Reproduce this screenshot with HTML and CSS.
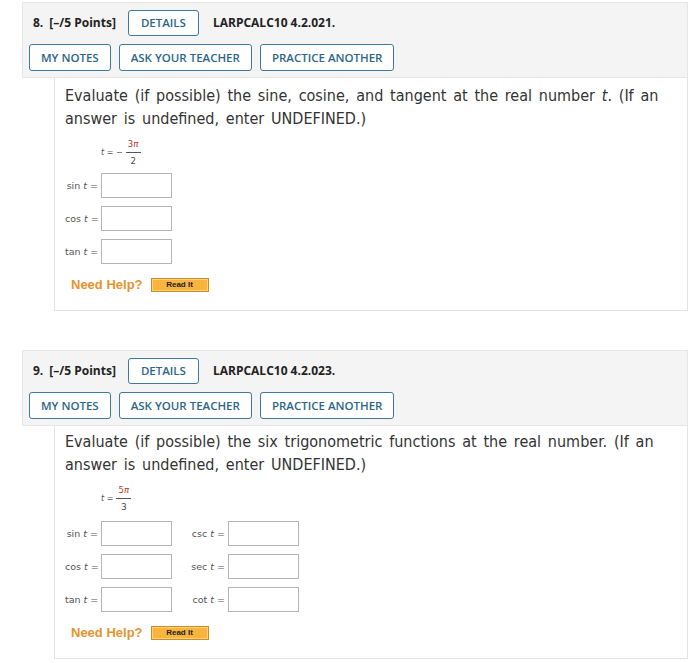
FILE: index.html
```html
<!DOCTYPE html>
<html>
<head>
<meta charset="utf-8">
<link rel="stylesheet" href="styles.css">
</head>
<body>
<div class="page">

  <section class="question q1">
    <div class="qhead">
      <div class="row1">
        <span class="num">8.</span>
        <span class="pts">[–/5 Points]</span>
        <button class="btn details">DETAILS</button>
        <span class="code">LARPCALC10 4.2.021.</span>
      </div>
      <div class="row2">
        <button class="btn">MY NOTES</button>
        <button class="btn">ASK YOUR TEACHER</button>
        <button class="btn">PRACTICE ANOTHER</button>
      </div>
    </div>
    <div class="qbody">
      <p class="prompt">Evaluate (if possible) the sine, cosine, and tangent at the real number <span class="var">t</span>. (If an answer is undefined, enter UNDEFINED.)</p>
      <div class="given">
        <span class="lhs"><span class="var">t</span> = −</span>
        <span class="frac"><span class="numr">3<span class="var">π</span></span><span class="den">2</span></span>
      </div>
      <div class="fields one">
        <label class="lab">sin <span class="var">t</span> =</label><span class="box"></span>
        <label class="lab">cos <span class="var">t</span> =</label><span class="box"></span>
        <label class="lab">tan <span class="var">t</span> =</label><span class="box"></span>
      </div>
      <div class="help">
        <span class="need">Need Help?</span>
        <span class="readit">Read It</span>
      </div>
    </div>
  </section>

  <section class="question q2">
    <div class="qhead">
      <div class="row1">
        <span class="num">9.</span>
        <span class="pts">[–/5 Points]</span>
        <button class="btn details">DETAILS</button>
        <span class="code">LARPCALC10 4.2.023.</span>
      </div>
      <div class="row2">
        <button class="btn">MY NOTES</button>
        <button class="btn">ASK YOUR TEACHER</button>
        <button class="btn">PRACTICE ANOTHER</button>
      </div>
    </div>
    <div class="qbody">
      <p class="prompt">Evaluate (if possible) the six trigonometric functions at the real number. (If an answer is undefined, enter UNDEFINED.)</p>
      <div class="given">
        <span class="lhs"><span class="var">t</span> =</span>
        <span class="frac"><span class="numr">5<span class="var">π</span></span><span class="den">3</span></span>
      </div>
      <div class="fields two">
        <label class="lab">sin <span class="var">t</span> =</label><span class="box"></span>
        <label class="lab">csc <span class="var">t</span> =</label><span class="box"></span>
        <label class="lab">cos <span class="var">t</span> =</label><span class="box"></span>
        <label class="lab">sec <span class="var">t</span> =</label><span class="box"></span>
        <label class="lab">tan <span class="var">t</span> =</label><span class="box"></span>
        <label class="lab">cot <span class="var">t</span> =</label><span class="box"></span>
      </div>
      <div class="help">
        <span class="need">Need Help?</span>
        <span class="readit">Read It</span>
      </div>
    </div>
  </section>

</div>
</body>
</html>
```

FILE: styles.css
```css
html, body {
  margin: 0;
  padding: 0;
  background: #fff;
}

.page {
  padding: 2px 12px 0 22px;
  width: 666px;
}

.question {
  margin-bottom: 39px;
}

.question:last-child {
  margin-bottom: 0;
}

.qhead {
  background: #f4f4f4;
  border: 1px solid #e6e6e6;
  padding: 6px 0 6px 6px;
  font-family: "Open Sans", "Liberation Sans", sans-serif;
}

.row1 {
  display: flex;
  align-items: center;
  height: 27px;
  padding-left: 4px;
}

.num {
  font-weight: 700;
  font-size: 12px;
  color: #222;
  margin-right: 6px;
}

.pts {
  font-weight: 700;
  font-size: 12px;
  color: #222;
  margin-right: 12px;
}

.code {
  font-weight: 700;
  font-size: 12px;
  color: #222;
  margin-left: 14px;
}

.btn {
  font-family: "Open Sans", "Liberation Sans", sans-serif;
  font-weight: 600;
  font-size: 11.5px;
  color: #2b6688;
  background: #fff;
  border: 1.5px solid #3c7b9c;
  border-radius: 3px;
  height: 27px;
  padding: 0 11px;
  line-height: 1;
  cursor: pointer;
}

.details {
  height: 26px;
  padding: 0 12px;
}

.row2 {
  display: flex;
  gap: 8px;
  margin-top: 8px;
}

.qbody {
  margin-left: 32px;
  border-left: 1px solid #e4e4e4;
  border-right: 1px solid #e4e4e4;
  border-bottom: 1px solid #e4e4e4;
  padding: 6px 0 18px 10px;
  font-family: "DejaVu Sans", Verdana, sans-serif;
  color: #333;
}

.q2 .qbody {
  padding-top: 4px;
}

.var {
  font-style: italic;
}

.prompt {
  margin: 0;
  font-size: 16px;
  line-height: 23px;
  font-stretch: condensed;
  letter-spacing: 0;
  word-spacing: 2.2px;
  color: #333;
}

.given {
  display: flex;
  align-items: center;
  margin: 5px 0 0 36px;
  font-size: 8px;
  color: #555;
  height: 34px;
}

.lhs {
  margin-right: 3px;
}

.frac {
  display: inline-flex;
  flex-direction: column;
  align-items: center;
  font-size: 8.5px;
}

.numr {
  color: #c0392b;
  padding: 0 2px 3px;
  border-bottom: 1px solid #555;
  min-width: 11px;
  text-align: center;
}

.den {
  padding-top: 3px;
  color: #444;
}

.fields {
  display: grid;
  align-items: center;
  row-gap: 8px;
  margin: 4px 0 0 0;
  width: max-content;
}

.fields.one {
  grid-template-columns: 33px 71px;
  column-gap: 3px;
}

.fields.two {
  grid-template-columns: 33px 71px 50px 71px;
  column-gap: 3px;
  margin-top: 6px;
}

.lab {
  font-size: 9.5px;
  color: #555;
  text-align: right;
  white-space: nowrap;
}

.box {
  display: block;
  height: 23px;
  border: 1px solid #b5b5b5;
  background: #fff;
}

.help {
  display: flex;
  align-items: center;
  margin: 13px 0 0 6px;
}

.need {
  font-family: "Liberation Sans", Arial, sans-serif;
  font-weight: 700;
  font-size: 13px;
  color: #e8922c;
  margin-right: 8px;
}

.readit {
  font-family: "Liberation Sans", Arial, sans-serif;
  font-weight: 700;
  font-size: 8px;
  color: #222;
  background: #f7b53f;
  border: 1px solid #d08a22;
  box-shadow: inset 0 0 0 1px #fbd27c;
  width: 56px;
  height: 12px;
  line-height: 12px;
  text-align: center;
}
```
